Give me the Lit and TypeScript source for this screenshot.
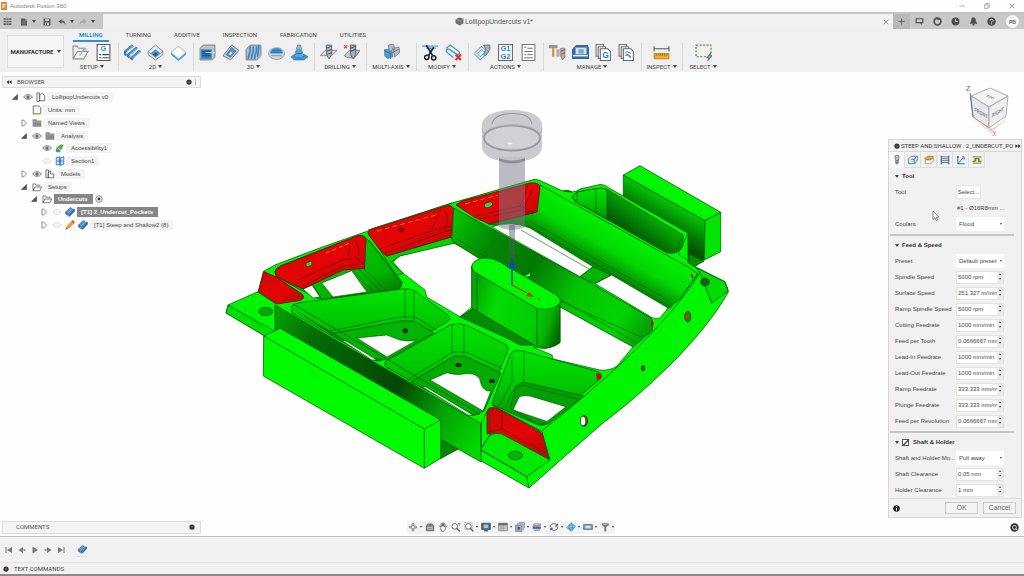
import { LitElement, html, css, svg, nothing } from "lit";
import { customElement, property, state } from "lit/decorators.js";
import { classMap } from "lit/directives/class-map.js";

/* ---------- icon set, drawn on a 16 x 16 grid ---------- */
const mill = svg`<path d="M1 8 8 1l3 1-7 7zM4 11l8-8 3 1-8 8z" fill="#4a9fe0" stroke="#27568a" stroke-width="1"/><path d="M1 8v3l6 4 8-8V4l-8 8-3-1z" fill="#2f76b8" stroke="#27568a" stroke-width="1"/><path d="M4 12l2 1" stroke="#d6ecfb"/>`;
const icons: Record<string, unknown> = {
  setup: svg`<path d="M1 14V2h4l1 2h5v3M1 14l4-7h10l-4 7z" fill="#f4f4f4" stroke="#8a8f94"/><path d="M7 11l5-7M10 4h3v3" fill="none" stroke="#a4abb1"/>`,
  gcode: svg`<path d="M2 .5h12v15H2z" fill="#fff" stroke="#555"/><text x="8" y="7" font-size="7" font-weight="700" text-anchor="middle" fill="#1c8bd0" font-family="Liberation Sans, sans-serif">G</text><path d="M4 10h2m1 0h6M4 13h2m1 0h6" stroke="#444"/>`,
  adaptive2d: svg`<path d="M0 7 7 1l2 1-7 6zM0 7v3l2 1V8zM3 10l8-7 2 1-8 7zM3 10v2l2 1v-2zM6 13l8-7 2 1-8 7zM6 13v1l2 1v-1z" fill="#3c96dd" stroke="#27689f" stroke-width=".7"/><path d="M2 8l7-6M5 11l8-7M8 14l8-7" stroke="#d6ecfb" stroke-width=".7"/>`,
  pocket2d: svg`<path d="M8 1 15 7v3l-7 5-7-5V7z" fill="#e8eaec" stroke="#777" stroke-width=".8"/><path d="M8 5l5 4-5 4-5-4z" fill="#3f97dc"/><path d="M8 8l3 2-3 2-3-2z" fill="#1a5c98"/><path d="M1 7l7 5 7-5" fill="none" stroke="#999" stroke-width=".7"/>`,
  face2d: svg`<path d="M8 2l7 6-7 6-7-6z" fill="#fff" stroke="#9aa" stroke-width=".8"/><path d="M1 8l7 6 7-6v2l-7 6-7-6z" fill="#41a3e6"/>`,
  adaptive3d: svg`<path d="M1 4l3-3h11v11l-3 3H1z" fill="#bfc4c9" stroke="#6b7278" stroke-width=".8"/><path d="M2 5h10v9H2z" fill="#2e86ce"/><path d="M3 7h8M3 9h7M3 11h8" stroke="#103f6b" stroke-width="1"/><path d="M6 8h9" stroke="#cfe7fa"/>`,
  pocket3d: svg`<path d="M9 1l7 5-8 9-7-4z" fill="#cfd3d7" stroke="#5c656d" stroke-width=".8"/><path d="M9 3.500l4 3-5 6-4-2.500z" fill="#5a94c9" stroke="#2d5f8d" stroke-width=".7"/><path d="M8 7l2 1.500-2 2L6.500 9.500z" fill="#d5e8f8"/>`,
  parallel: svg`<path d="M1 5l4-4h10v10l-4 4H1z" fill="#b7bcc1" stroke="#737a80" stroke-width=".8"/><path d="M3 14c0-4 2-4 2-12M6 14c0-4 2-4 2-12M9 14c0-4 2-4 2-12M12 12c0-4 1-4 1-11" fill="none" stroke="#2b87d3" stroke-width="1.500"/>`,
  scallop: svg`<ellipse cx="8" cy="9" rx="7.500" ry="5.500" fill="#d3d7da" stroke="#858c92" stroke-width=".7"/><path d="M2 9c0-7 12-7 12 0z" fill="#3b97de"/><path d="M4 6h8M3 8h10" stroke="#1e69a8" stroke-width=".8"/><path d="M3 11h10" stroke="#8b9298"/>`,
  steep: svg`<path d="M0 12l3-2h10l3 2-4 3H3z" fill="#3b97de" stroke="#26659b" stroke-width=".6"/><path d="M3 11l1-2h7l2 2-3 2H5zM4 8l1-2h5l1 2-2 1H6z" fill="#54a8e4" stroke="#26659b" stroke-width=".6"/><path d="M5 5 6 1h3l1 4z" fill="#8fb7d8" stroke="#4e6e88" stroke-width=".6"/>`,
  drill: svg`<path d="M0 11l5-5h11l-5 5z" fill="#e4e6e8" stroke="#7b8187" stroke-width=".8"/><path d="M6 1h5v9l-2.500 4L6 10z" fill="#b5babf" stroke="#565d63" stroke-width=".8"/><path d="M6 4l5-2M6 7l5-2M6 10l5-2" stroke="#565d63"/>`,
  drill2: svg`<path d="M1 11l5-5h10l-5 7H5z" fill="#c8ccd0" stroke="#6b7278" stroke-width=".8"/><path d="M7 1h5v9l-2.500 4L7 10z" fill="#a9afb5" stroke="#4d545a" stroke-width=".8"/><path d="M7 4l5-2M7 7l5-2" stroke="#4d545a"/><path d="M1 1l3 3M4 1 1 4" stroke="#e0452e"/>`,
  multi: svg`<path d="M1 5l7-1 2 8-6 2-3-3z" fill="#4e9cc9"/><path d="M5 1l5-1 1 5-5 2zM9 4l6-1 1 5-5 4z" fill="#b6bec4" stroke="#68747d" stroke-width=".7"/><path d="M1 6l6 3 8-4M7 9v5" fill="none" stroke="#3d6d8b" stroke-width=".8"/>`,
  scissors: svg`<path d="M0 2h15M4 4h9" stroke="#4ba0d8" stroke-width="1.300"/><path d="M4 1l6 10M11 3 6 11" stroke="#222" stroke-width="1.600"/><circle cx="4.500" cy="12.500" r="2" fill="none" stroke="#222" stroke-width="1.400"/><circle cx="11" cy="13" r="2" fill="none" stroke="#222" stroke-width="1.400"/>`,
  pathdel: svg`<path d="M1 4l4-3 8 6c2 2-1 4-3 2L4 5c-2-1-4 1-2 3l6 5" fill="none" stroke="#4b9bd3" stroke-width="1.300"/><path d="M10 10l5 5m0-5-5 5" stroke="#e0362a" stroke-width="2"/>`,
  simulate: svg`<path d="M7 2 0 9l6 6 7-7z" fill="#d7eafa" stroke="#3c8fd1" stroke-width=".9"/><path d="M7 5 3 9l3 3 4-4z" fill="none" stroke="#3c8fd1" stroke-width=".7"/><path d="M9 1h6v4l-4 6-2-1 2-5z" fill="#a7adb3" stroke="#565d63" stroke-width=".7"/>`,
  g1g2: svg`<path d="M1.500.5h13v15h-13z" fill="#fff" stroke="#666"/><g font-size="7" font-weight="700" text-anchor="middle" fill="#1583c9" font-family="Liberation Sans, sans-serif"><text x="8" y="7">G1</text><text x="8" y="14">G2</text></g>`,
  sheet: svg`<path d="M2 .5h12v15H2z" fill="#fff" stroke="#777"/><path d="M4 3h2m1 1h5M4 7h8M4 10h2m1 0h5M4 13h8" stroke="#666" stroke-width=".9"/>`,
  library: svg`<path d="M0 1h8v3H0z" fill="#8f979d"/><path d="M3 3h2v9H3z" fill="#d58a33"/><path d="M7 5h3v7H7z" fill="#a8aeb3"/><path d="M11 4h4v8l-2 3-2-3z" fill="#b7aaa2" stroke="#726a66" stroke-width=".6"/><path d="M11 7l4-2M11 10l4-2" stroke="#665f5b" stroke-width=".7"/>`,
  machine: svg`<path d="M0 14V5l4-4h11l1 3v10z" fill="#2b6ca6"/><path d="M3 3h11v7H3z" fill="#cfe3f3" stroke="#49708f" stroke-width=".7"/><path d="M6 5h5v4H6z" fill="#7fa8c8"/><path d="M1 11h14" stroke="#e6eef5" stroke-width="1.500"/>`,
  postlib: svg`<path d="M1 .5h7v11H1z" fill="#eee" stroke="#777"/><path d="M3 2.500h7v11H3z" fill="#eee" stroke="#777"/><path d="M5 4.500h7l2.500 2.500v8.500H5z" fill="#fff" stroke="#666"/><text x="10" y="13.500" font-size="8" font-weight="700" text-anchor="middle" fill="#1583c9" font-family="Liberation Sans, sans-serif">G</text>`,
  template: svg`<path d="M1 .5h7v11H1z" fill="#eee" stroke="#777"/><path d="M3 2.500h7v11H3z" fill="#eee" stroke="#777"/><path d="M5 4.500h7l2.500 2.500v8.500H5z" fill="#fff" stroke="#666"/><path d="M7 8c2-2 3 0 5 1M7 11c2-2 3 0 5 1M8 9l4 4" fill="none" stroke="#3490d4" stroke-width="1.100"/>`,
  measure: svg`<path d="M1 2v5M15 2v5M1 4.500h14" stroke="#555"/><path d="M1 9h14v5H1z" fill="#f0a830" stroke="#b97b16" stroke-width=".7"/><path d="M3 9v2m2-2v2m2-2v2m2-2v2m2-2v2m2-2v2" stroke="#8a5b10" stroke-width=".7"/>`,
  select: svg`<path d="M1 1h14v11H1z" fill="none" stroke="#3f9a4b" stroke-width="1.100" stroke-dasharray="2 1.300"/><path d="M15 8l-4 5h2l-1 3 4-5h-2z" fill="#999" stroke="#555" stroke-width=".6"/>`,

  grid: svg`<path d="M1 2h4v3H1zm5 0h4v3H6zm5 0h4v3h-4zM1 6.500h4v3H1zm5 0h4v3H6zm5 0h4v3h-4zM1 11h4v3H1zm5 0h4v3H6zm5 0h4v3h-4z" fill="#5b5b5b"/>`,
  file: svg`<path d="M2 1h8v4h4v10H2z" fill="#5a5a5a"/><path d="M11 1l3 3h-3z" fill="#5a5a5a"/><path d="M4 8h8M4 11h8" stroke="#aaa" stroke-width=".8"/>`,
  save: svg`<path d="M1 1h14v14H1z" fill="#5a5a5a"/><path d="M4 2h8v4H4zM4 9h8v5H4z" fill="#c8c8c8"/><path d="M6 10h2v4H6z" fill="#5a5a5a"/>`,
  undo: svg`<path d="M7 2v3c6 0 8 4 8 9-2-4-4-5-8-5v3L1 7z" fill="#5c5c5c"/>`,
  redo: svg`<path d="M9 2v3c-6 0-8 4-8 9 2-4 4-5 8-5v3l6-5z" fill="#a2a2a2"/>`,
  cube: svg`<path d="M1 4l7-3 7 2v8l-6 4-8-4z" fill="#6d6d6d"/><path d="M1 4l8 3 6-4" fill="none" stroke="#bbb"/><path d="M9 7v8" stroke="#999"/>`,
  chat: svg`<path d="M1 2h14v9h-3v3l-3-3H1z" fill="#4d4d4d"/><path d="M3 4h10v5H3z" fill="#c8c8c8"/>`,
  online: svg`<circle cx="8" cy="8" r="6" fill="none" stroke="#4d4d4d" stroke-width="3"/><path d="M5 1l5 4" stroke="#4d4d4d" stroke-width="2"/>`,
  clock: svg`<circle cx="8" cy="8" r="7" fill="#4d4d4d"/><path d="M8 3.500V8h4" fill="none" stroke="#ddd" stroke-width="1.600"/>`,
  bell: svg`<path d="M8 1c4 0 4 4 4 6l3 5H1l3-5c0-2 0-6 4-6z" fill="#4d4d4d"/><circle cx="8" cy="13.500" r="2" fill="#4d4d4d"/>`,
  help: svg`<circle cx="8" cy="8" r="7.500" fill="#4d4d4d"/><path d="M5.500 6.500c0-4 5.500-3 5 0-.4 1.500-2.500 1.500-2.500 3.500M8 11v2" fill="none" stroke="#ddd" stroke-width="1.700"/>`,
  plus: svg`<path d="M8 1v14M1 8h14" stroke="#555" stroke-width="1.800"/>`,
  cross: svg`<path d="M2 2l12 12M14 2 2 14" stroke="#666" stroke-width="1.800"/>`,
  min: svg`<path d="M1 8h14" stroke="#777" stroke-width="1.400"/>`,
  restore: svg`<path d="M1.500 4.500h9v10h-9zM5 4V1.500h9v10h-3" fill="none" stroke="#777" stroke-width="1.400"/>`,

  eye: svg`<path d="M1 8c3-5 11-5 14 0-3 5-11 5-14 0z" fill="#ddd" stroke="#777" stroke-width="1.400"/><circle cx="8" cy="8" r="2.600" fill="#666"/>`,
  eyeoff: svg`<path d="M1 8c3-5 11-5 14 0-3 5-11 5-14 0z" fill="#f4f4f4" stroke="#dcdcdc" stroke-width="1.400"/>`,
  open: svg`<path d="M13 3v10H3z" fill="#555" stroke="#333"/>`,
  closed: svg`<path d="M4 2h3l6 6-6 6H4z" fill="#fff" stroke="#666" stroke-width="1.500"/>`,
  doc: svg`<path d="M1.500 1.500h4V15h-4z" fill="#fff" stroke="#555" stroke-width="1.300"/><path d="M6 5l4-3 4 4v8H6z" fill="#fff" stroke="#555" stroke-width="1.300"/>`,
  units: svg`<path d="M2 1.500h9l3 3v9.500H2z" fill="#fff" stroke="#555" stroke-width="1.300"/><path d="M1 14h13" stroke="#dd9a2c" stroke-width="2"/>`,
  folder: svg`<path d="M1 2h6l1 2h7v10H1z" fill="#8b8b8b"/><path d="M1 6h14" stroke="#b5b5b5"/>`,
  access: svg`<path d="M2 7l8-5 4 1-6 12-5-1z" fill="#62a84e"/><path d="M5 8l5 5M11 2l4 2" stroke="#e8f0e4" stroke-width="1.500"/><circle cx="4" cy="12" r="3" fill="#4c8fae"/>`,
  section: svg`<path d="M2 2h5v12H2zM9 3l5-2v12l-5 2z" fill="#cfe4f6" stroke="#3178b7" stroke-width="1.400"/><path d="M8 0v16M3 8h10" stroke="#3178b7" stroke-width="1.200"/>`,
  models: svg`<path d="M1.500 1.500h4V14h-4zM5 14V6l4-3v5h5v6z" fill="#fff" stroke="#555" stroke-width="1.300"/>`,
  fopen: svg`<path d="M1.500 14V3h4l1 2h6v2M1.500 14l3-6h11l-3 6z" fill="#fafafa" stroke="#666" stroke-width="1.300"/>`,
  target: svg`<circle cx="8" cy="8" r="6.500" fill="#fff" stroke="#555" stroke-width="1.400"/><circle cx="8" cy="8" r="2.800" fill="#333"/>`,
  pencil: svg`<path d="M1 15l2-6 7-7 4 4-7 7z" fill="#eaa22f"/><path d="M10 2l2-2 4 4-2 2z" fill="#c24c3c"/><path d="M1 15l1-3 2 2z" fill="#333"/>`,
  mill,
  dot: svg`<circle cx="8" cy="8" r="7" fill="#333"/><path d="M5 8h6" stroke="#bbb" stroke-width="1.500"/>`,
  info: svg`<circle cx="8" cy="8" r="7.500" fill="#222"/><path d="M8 3v2M8 7v6" stroke="#fff" stroke-width="2"/>`,
  rewind: svg`<path d="M8 3v10L1 8zM15 3v10L8 8z" fill="#333"/>`,
  forward: svg`<path d="M1 3v10l7-5zM8 3v10l7-5z" fill="#333"/>`,

  tool: svg`<path d="M5 1h6v5l-1 2v5l-2 2-2-2V8L5 6z" fill="#b9bec2" stroke="#555"/><path d="M6 10l4-2M6 13l4-2" stroke="#444"/>`,
  geom: svg`<path d="M1 6l4-4h10v6l-5 6H1z" fill="#dcebf7" stroke="#35648d" stroke-width="1.200"/><path d="M5 7h5l3-4M10 7v6" fill="none" stroke="#2a7fc2" stroke-width="1.600"/>`,
  heights: svg`<path d="M1 6l5-4h9l-4 5H2z" fill="#f2a735" stroke="#9c6717"/><path d="M2 8h9l4-4v5l-4 5H2z" fill="#fff" stroke="#777"/>`,
  passes: svg`<path d="M2 1v14M14 1v14" stroke="#345" stroke-width="1.500"/><path d="M3 3h10M3 6h10M3 9h10M3 12h10" stroke="#4981ad" stroke-width="1.500"/>`,
  linking: svg`<path d="M3 2v12h11M3 14 12 4M10 3h3v4" fill="none" stroke="#2c6fae" stroke-width="1.600"/><circle cx="3" cy="3" r="1.600" fill="#2c6fae"/>`,
  multitab: svg`<path d="M1 2h14v12H1z" fill="#f6e3a4"/><path d="M1 3h14M1 13h14" stroke="#6d8f4a" stroke-width="1.500"/><path d="M1 10h4V6h6v4h4" fill="none" stroke="#3e6a39" stroke-width="1.800"/>`,

  orbit: svg`<path d="M8 1l3 3H5zM8 15l3-3H5zM1 8l3-3v6zM15 8l-3-3v6z" fill="#777"/><circle cx="8" cy="8" r="3" fill="none" stroke="#666" stroke-width="1.200"/>`,
  lookat: svg`<path d="M2 6l3-3h6l3 3v8H2z" fill="#888" stroke="#444"/><path d="M4 8h8v4H4z" fill="#ddd"/><path d="M5 10h6" stroke="#444"/>`,
  pan: svg`<path d="M4 9 2 7l1-1 2 2V3l1-1 1 1v4-5l1-1 1 1v5-4l1-1 1 1v5l1-2 1 1-2 6-2 2H6z" fill="#fff" stroke="#555" stroke-width="1.200"/>`,
  zoomin: svg`<circle cx="6" cy="7" r="4.500" fill="#fff" stroke="#555" stroke-width="1.400"/><path d="M9 10l5 5" stroke="#555" stroke-width="2"/><path d="M13 1v5m-2-3h4" stroke="#555"/>`,
  fit: svg`<path d="M1 1h12v11H1z" fill="none" stroke="#999" stroke-dasharray="2 1"/><circle cx="7" cy="7" r="4.500" fill="#fff" stroke="#555" stroke-width="1.300"/><path d="M10 10l5 5" stroke="#555" stroke-width="2"/>`,
  display: svg`<path d="M1 2h14v10H1z" fill="#315b8c" stroke="#444"/><path d="M4 4h8v6H4z" fill="#a8c3de"/><path d="M5 14h6" stroke="#444" stroke-width="2"/>`,
  gridset: svg`<path d="M1 2h14v12H1z" fill="#eee" stroke="#555"/><path d="M1 5h14M1 8h14M1 11h14M5 5v9M9 5v9" stroke="#777"/><path d="M1 2h14v3H1z" fill="#666"/>`,
  views: svg`<path d="M1 5h10v10H1z" fill="#9fb5c8" stroke="#4d5a66"/><path d="M3 3h10v10M6 1h9v9" fill="none" stroke="#4d5a66"/><path d="M4 8h4v4H4z" fill="#4d5a66"/>`,
  slab: svg`<path d="M3 3h11l-1 3H2z" fill="#c3c9ce" stroke="#555" stroke-width=".8"/><path d="M1 7h13v4H1z" fill="#3e6d99"/><path d="M3 12h10v2H3z" fill="#888"/>`,
  rotate: svg`<path d="M2 8c0-6 8-7 11-3M14 8c0 6-8 7-11 3" fill="none" stroke="#557" stroke-width="1.400"/><path d="M14 2v5H9zM2 14V9h5z" fill="#557"/>`,
  diamond: svg`<path d="M8 1l7 6-6 8-8-6z" fill="#4aa0dd" stroke="#2b74ac" stroke-width=".8"/><path d="M1 9l7-2 7 0M8 1v6l1 8" stroke="#9bd0f2" fill="none"/>`,
  screen: svg`<path d="M1 4h14v8H1z" fill="#7f9fc0" stroke="#445a70"/><path d="M4 6h8v4H4z" fill="#d3e0ec"/>`,
  filter: svg`<path d="M3 2h11v3l-4 3v7H7V8L3 5z" fill="#777"/><path d="M5 4h7" stroke="#ddd"/>`,

  tstart: svg`<path d="M2 2v12" stroke="#777" stroke-width="2"/><path d="M14 2v12L4 8z" fill="#777"/>`,
  tprev: svg`<path d="M10 2v12L1 8z" fill="#777"/><path d="M11 6h4v4h-4z" fill="#999"/>`,
  tplay: svg`<path d="M3 1l11 7-11 7z" fill="#777"/>`,
  tnext: svg`<path d="M6 2v12l9-6z" fill="#777"/><path d="M1 6h4v4H1z" fill="#999"/>`,
  tend: svg`<path d="M14 2v12" stroke="#777" stroke-width="2"/><path d="M2 2v12l10-6z" fill="#777"/>`,
  assist: svg`<circle cx="8" cy="8" r="7.500" fill="#333"/><circle cx="8" cy="8" r="3.500" fill="none" stroke="#eee" stroke-width="1.500"/><path d="M10 10l3 3" stroke="#eee" stroke-width="1.500"/>`,
};

const ico = (name: string, size = 9) =>
  html`<svg class="ico" width=${size} height=${size} viewBox="0 0 16 16" aria-hidden="true">${icons[name]}</svg>`;
const caret = html`<i class="caret"></i>`;

const shared = css`
  * { box-sizing: border-box; }
  button, input, select { font: inherit; color: inherit; margin: 0; padding: 0; border: 0; background: none; border-radius: 0; min-width: 0; }
  button { display: inline-flex; align-items: center; justify-content: center; }
  .ico { display: block; flex: none; }
  .caret { flex: none; display: inline-block; border: 2px solid transparent; border-top: 3px solid #444; border-bottom: 0; }
`;

/* ---------- title bar and document tab ---------- */
@customElement("title-area")
class TitleArea extends LitElement {
  static styles = [shared, css`
    :host { display: block; }
    .title { display: flex; align-items: center; height: 12px; background: #fdfdfc; color: #888; padding: 0 1px 0 1px; gap: 3px; }
    .logo { width: 6px; height: 8px; background: #e08a3c; color: #fff; font-weight: 700; line-height: 8px; text-align: center; }
    .name { flex: 1; }
    .win { width: 22px; height: 12px; }
    .bar { display: flex; height: 17px; background: #c8c8c8; border-top: 2px solid #c4c4c4; }
    .quick { display: flex; align-items: center; width: 103px; padding-left: 4px; }
    .quick button { height: 15px; gap: 4px; margin-right: 12px; }
    .quick button + button { margin-right: 10px; }
    .doc { flex: 1; display: flex; align-items: center; background: #f1f1f1; color: #555; font-size: 7px; padding-left: 6px; }
    .docname { flex: 1; display: flex; align-items: center; justify-content: center; gap: 1px; }
    .close { width: 14px; height: 15px; }
    .right { display: flex; align-items: center; width: 131px; }
    .right button { width: 17px; height: 15px; margin-right: 1px; }
    .right .add { background: #b8b8b8; }
    .right .me { width: 13px; height: 13px; border-radius: 50%; background: #f6f6f6; color: #666; font-weight: 700; font-size: 5px; margin-left: 5px; }
  `];
  render() {
    return html`
      <header class="title">
        <span class="logo">F</span><span class="name">Autodesk Fusion 360</span>
        <button class="win" aria-label="Minimize">${ico("min", 6)}</button>
        <button class="win" aria-label="Restore">${ico("restore", 6)}</button>
        <button class="win" aria-label="Close window">${ico("cross", 6)}</button>
      </header>
      <div class="bar">
        <div class="quick">
          <button aria-label="Data panel">${ico("grid", 9)}</button>
          <button aria-label="File">${ico("file", 8)}${caret}</button>
          <button aria-label="Save">${ico("save", 8)}</button>
          <button aria-label="Undo">${ico("undo", 8)}${caret}</button>
          <button aria-label="Redo">${ico("redo", 8)}${caret}</button>
        </div>
        <div class="doc">
          <span class="docname">${ico("cube", 9)}<span>LollipopUndercuts v1*</span></span>
          <button class="close" aria-label="Close document">${ico("cross", 6)}</button>
        </div>
        <div class="right">
          <button class="add" aria-label="New design">${ico("plus", 7)}</button>
          ${["chat", "online", "clock", "bell", "help"].map((n) => html`<button aria-label=${n}>${ico(n, 9)}</button>`)}
          <button class="me" aria-label="Account">PB</button>
        </div>
      </div>`;
  }
}

/* ---------- ribbon ---------- */
interface Group { label: string; icons: string[]; wide?: string }
const groups: Group[] = [
  { label: "SETUP", icons: ["setup", "gcode"] },
  { label: "2D", icons: ["adaptive2d", "pocket2d", "face2d"] },
  { label: "3D", icons: ["adaptive3d", "pocket3d", "parallel", "scallop", "steep"] },
  { label: "DRILLING", icons: ["drill", "drill2"] },
  { label: "MULTI-AXIS", icons: ["multi"], wide: "mid" },
  { label: "MODIFY", icons: ["scissors", "pathdel"] },
  { label: "ACTIONS", icons: ["simulate", "g1g2", "sheet"] },
  { label: "MANAGE", icons: ["library", "machine", "postlib", "template"] },
  { label: "INSPECT", icons: ["measure"], wide: "narrow" },
  { label: "SELECT", icons: ["select"], wide: "narrow" },
];

@customElement("tool-ribbon")
class ToolRibbon extends LitElement {
  @state() private tab = "MILLING";
  static styles = [shared, css`
    :host { display: flex; height: 43px; background: #f0f0f0; font-family: Roboto, sans-serif; color: #444; }
    .space { width: 57px; height: 33px; margin: 6px 3px 4px 7px; border: 1px solid #dcdcdc; background: #f5f5f5; font-weight: 700; gap: 3px; color: #333; }
    .main { flex: 1; min-width: 0; }
    .tabs { display: flex; height: 13px; padding-left: 1px; }
    .tabs button { margin: 0 6px 0 5px; padding: 0 6px; border-bottom: 2px solid transparent; white-space: nowrap; }
    .tabs .on { color: #1a90cf; font-weight: 700; border-color: #2f8fd6; }
    .groups { display: flex; margin-top: 1px; }
    .group { display: flex; flex-direction: column; align-items: center; padding: 0 3px 0 2px; border-right: 1px solid #dadada; height: 28px; }
    .group:last-child { border: 0; }
    .set { display: flex; height: 19px; }
    .set button { width: 23px; height: 18px; }
    .label { height: 9px; gap: 2px; white-space: nowrap; }
    .mid { width: 50px; }
    .narrow { width: 41px; }
  `];
  render() {
    return html`
      <button class="space">MANUFACTURE${caret}</button>
      <div class="main">
        <nav class="tabs">${["MILLING", "TURNING", "ADDITIVE", "INSPECTION", "FABRICATION", "UTILITIES"].map(
          (t) => html`<button class=${classMap({ on: t === this.tab })} @click=${() => (this.tab = t)}>${t}</button>`)}</nav>
        <div class="groups">${groups.map((g) => html`
          <div class="group ${g.wide ?? ""}">
            <div class="set">${g.icons.map((n) => html`<button aria-label=${n}>${ico(n, 17)}</button>`)}</div>
            <button class="label">${g.label}${caret}</button>
          </div>`)}</div>
      </div>`;
  }
}

/* ---------- browser tree ---------- */
interface Node { depth: number; cells: string[]; text: string; sel?: boolean; after?: string }
const tree: Node[] = [
  { depth: 8, cells: ["open", "eye", "doc"], text: "LollipopUndercuts v0" },
  { depth: 30, cells: ["units"], text: "Units: mm" },
  { depth: 17, cells: ["closed", "folder"], text: "Named Views" },
  { depth: 17, cells: ["open", "eye", "folder"], text: "Analysis" },
  { depth: 40, cells: ["eye", "access"], text: "Accessibility1" },
  { depth: 40, cells: ["eyeoff", "section"], text: "Section1" },
  { depth: 17, cells: ["closed", "eye", "models"], text: "Models" },
  { depth: 17, cells: ["open", "fopen"], text: "Setups" },
  { depth: 27, cells: ["open", "fopen"], text: "Undercuts", sel: true, after: "target" },
  { depth: 37, cells: ["closed", "eyeoff", "mill"], text: "[T1] 2_Undercut_Pockets", sel: true },
  { depth: 37, cells: ["closed", "eyeoff", "pencil", "mill"], text: "[T1] Steep and Shallow2 (8)" },
];

@customElement("browser-tree")
class BrowserTree extends LitElement {
  static styles = [shared, css`
    :host { display: block; width: 199px; }
    .head { display: flex; align-items: center; height: 12px; padding: 0 3px; gap: 5px; background: #f3f3f3; border: 1px solid #dcdcdc; font-family: Roboto, sans-serif; color: #555; }
    .head span { flex: 1; }
    .grip { width: 2px; height: 6px; border-left: 1px solid #bbb; margin-left: -2px; }
    ul { list-style: none; margin: 3px 0 0 -2px; padding: 0; height: 140px; display: flex; flex-direction: column; }
    li { flex: 1; display: flex; align-items: center; color: #444; }
    .cell { width: 13px; display: flex; justify-content: center; }
    .text { background: #f3f3f3; padding: 0 5px; line-height: 10px; white-space: nowrap; }
    .sel .text { background: #868686; color: #fff; font-weight: 700; margin-left: 1px; padding-left: 4px; }
  `];
  render() {
    return html`
      <div class="head">${ico("rewind", 6)}<span>BROWSER</span>${ico("dot", 6)}<i class="grip"></i></div>
      <ul>${tree.map((n) => html`
        <li class=${classMap({ sel: !!n.sel })} style="padding-left:${n.depth}px">
          ${n.cells.map((c) => html`<span class="cell">${ico(c, c === "open" || c === "closed" ? 8 : 10)}</span>`)}
          <span class="text">${n.text}</span>
          ${n.after ? html`<span class="cell">${ico(n.after, 8)}</span>` : nothing}
        </li>`)}</ul>`;
  }
}

/* ---------- operation dialog ---------- */
interface Row { label: string; kind: "select" | "num" | "button" | "note"; value: string }
const sections: { title: string; check?: boolean; rows: Row[] }[] = [
  { title: "Tool", rows: [
    { label: "Tool", kind: "button", value: "Select..." },
    { label: "", kind: "note", value: "#1 - Ø16R8mm ..." },
    { label: "Coolant", kind: "select", value: "Flood" } ] },
  { title: "Feed & Speed", rows: [
    { label: "Preset", kind: "select", value: "Default preset" },
    { label: "Spindle Speed", kind: "num", value: "5000 rpm" },
    { label: "Surface Speed", kind: "num", value: "251.327 m/min" },
    { label: "Ramp Spindle Speed", kind: "num", value: "5000 rpm" },
    { label: "Cutting Feedrate", kind: "num", value: "1000 mm/min" },
    { label: "Feed per Tooth", kind: "num", value: "0.0666667 mm" },
    { label: "Lead-In Feedrate", kind: "num", value: "1000 mm/min" },
    { label: "Lead-Out Feedrate", kind: "num", value: "1000 mm/min" },
    { label: "Ramp Feedrate", kind: "num", value: "333.333 mm/min" },
    { label: "Plunge Feedrate", kind: "num", value: "333.333 mm/min" },
    { label: "Feed per Revolution", kind: "num", value: "0.0666667 mm" } ] },
  { title: "Shaft & Holder", check: true, rows: [
    { label: "Shaft and Holder Mo...", kind: "select", value: "Pull away" },
    { label: "Shaft Clearance", kind: "num", value: "0.05 mm" },
    { label: "Holder Clearance", kind: "num", value: "1 mm" } ] },
];

@customElement("operation-dialog")
class OperationDialog extends LitElement {
  @property() heading = "STEEP AND SHALLOW : 2_UNDERCUT_PO";
  static styles = [shared, css`
    :host { display: block; position: relative; width: 134px; background: #f1f1f1; border: 1px solid #d4d4d4; color: #444; }
    .head { display: flex; align-items: center; height: 12px; gap: 1px; padding-left: 5px; font-family: Roboto, sans-serif; color: #333; border-bottom: 1px solid #d8d8d8; }
    .head span { flex: 1; white-space: nowrap; }
    .tabs { display: flex; height: 16px; }
    .tabs button { width: 16px; border-right: 1px solid #ddd; border-bottom: 1px solid #ddd; }
    .tabs .on { background: #fafafa; border-bottom-color: #fafafa; }
    section { padding: 0 17px 5px 6px; }
    .rule { height: 2px; background: #c6c6c6; margin: -3px 7px 1px 1px; }
    h2 { display: flex; align-items: center; gap: 3px; height: 16px; margin: 0; font-size: 6px; color: #333; }
    section:last-of-type { padding-bottom: 0; }
    .row { display: grid; grid-template-columns: 61px 1fr; align-items: center; height: 16px; white-space: nowrap; }
    .row label { overflow: hidden; }
    .field { display: flex; align-items: center; height: 13px; background: #fff; border: 1px solid #e2e2e2; }
    .field input { width: 40px; padding-left: 1px; height: 11px; }
    .spin { display: flex; flex-direction: column; width: 6px; height: 11px; background: #ececec; }
    .spin button { height: 5px; width: 6px; }
    .up, .down { border: 1px solid transparent; border-bottom: 2px solid #444; border-top: 0; }
    .down { border-bottom: 0; border-top: 2px solid #444; }
    .drop { display: grid; align-items: center; height: 14px; background: #fff; }
    .drop select { grid-area: 1 / 1; appearance: none; width: 100%; height: 14px; padding-left: 3px; }
    .drop .caret { grid-area: 1 / 1; justify-self: end; margin-right: 2px; pointer-events: none; border-width: 1px; border-top-width: 2px; border-bottom: 0; }
    .pick { width: 25px; height: 14px; background: #fff; border: 1px solid #e4e4e4; }
    .note { padding-left: 1px; }
    .check { appearance: none; width: 7px; height: 7px; border: 1px solid #555; background: linear-gradient(135deg, #fff 45%, #555 45%, #555 62%, #fff 62%); margin-right: 1px; }
    footer { display: flex; align-items: center; gap: 5px; height: 19px; padding: 0 5px 0 4px; border-top: 1px solid #dedede; }
    footer .gap { flex: 1; }
    footer button { width: 33px; height: 12px; border: 1px solid #ccc; background: #f4f4f4; font-size: 7px; color: #666; }
    .pointer { position: absolute; left: 43px; top: 70px; }
  `];
  private control(r: Row, id: string) {
    switch (r.kind) {
      case "button": return html`<button id=${id} class="pick">${r.value}</button>`;
      case "note": return html`<span class="note">${r.value}</span>`;
      case "select": return html`<span class="drop"><select id=${id}><option>${r.value}</option></select>${caret}</span>`;
      default: return html`<span class="field"><input id=${id} type="text" .value=${r.value}>
        <span class="spin"><button aria-label="Increase"><i class="up"></i></button><button aria-label="Decrease"><i class="down"></i></button></span></span>`;
    }
  }
  render() {
    return html`
      <div class="head">${ico("dot", 6)}<span>${this.heading}</span>${ico("forward", 6)}</div>
      <div class="tabs">${["tool", "geom", "heights", "passes", "linking", "multitab"].map(
        (n, i) => html`<button class=${i ? "" : "on"} aria-label=${n}>${ico(n, 10)}</button>`)}</div>
      ${sections.map((s, i) => html`${i ? html`<div class="rule"></div>` : nothing}
        <section>
          <h2><i class="caret"></i>${s.check ? html`<input class="check" id="chk" type="checkbox" checked><label for="chk">${s.title}</label>` : html`<span>${s.title}</span>`}</h2>
          ${s.rows.map((r, j) => html`<div class="row">${r.label ? html`<label for="f${i}-${j}">${r.label}</label>` : html`<span></span>`}${this.control(r, `f${i}-${j}`)}</div>`)}
        </section>`)}
      <footer>${ico("info", 7)}<span class="gap"></span><button>OK</button><button>Cancel</button></footer>
      <svg class="pointer" width="8" height="12" viewBox="0 0 8 12"><path d="M1 1v8.500l2-1.800 1.300 3 1.300-.6-1.300-2.900h2.600z" fill="#fff" stroke="#666" stroke-width=".8"/></svg>`;
  }
}

/* ---------- machined part ---------- */
@customElement("part-view")
class PartView extends LitElement {
  static styles = css`
    :host { display: block; }
    .scene { display: block; width: 100%; height: 100%; }
    .e { fill: none; stroke: #075c07; stroke-width: .8; stroke-linejoin: round; }
    .f { stroke: #075c07; stroke-width: .8; stroke-linejoin: round; }
    .top { fill: #00f600; }
    .w { fill: #fefefe; stroke: #075c07; stroke-width: .7; }
    .thin { fill: none; stroke: #066006; stroke-width: .6; }
    .red { fill: url(#red); stroke: #5c0505; stroke-width: .7; }
    .rl { fill: none; stroke: #770808; stroke-width: .7; }
  `;
  render() {
    return html`<svg class="scene" viewBox="0 72 1024 464" role="img" aria-label="Accessibility analysis of the part">
      <defs>
        <linearGradient id="red" x1="0" y1="0" x2="1" y2="1"><stop offset="0" stop-color="#c80808"/><stop offset=".5" stop-color="#e60505"/><stop offset="1" stop-color="#b80a0a"/></linearGradient>
        <linearGradient id="front" gradientUnits="userSpaceOnUse" x1="270" y1="310" x2="485" y2="435"><stop offset="0" stop-color="#04a804"/><stop offset=".2" stop-color="#046c04"/><stop offset=".6" stop-color="#034603"/><stop offset=".8" stop-color="#04a004"/><stop offset="1" stop-color="#03d803"/></linearGradient>
        <linearGradient id="rail1" gradientUnits="userSpaceOnUse" x1="455" y1="220" x2="650" y2="335"><stop offset="0" stop-color="#04c004"/><stop offset=".2" stop-color="#048404"/><stop offset=".4" stop-color="#047804"/><stop offset=".62" stop-color="#03c403"/><stop offset=".85" stop-color="#03d403"/><stop offset="1" stop-color="#049804"/></linearGradient>
        <linearGradient id="rail2" gradientUnits="userSpaceOnUse" x1="620" y1="225" x2="598" y2="264"><stop offset="0" stop-color="#00f400"/><stop offset=".6" stop-color="#02d802"/><stop offset="1" stop-color="#049004"/></linearGradient>
        <linearGradient id="wall" x1="0" y1="0" x2="0" y2="1"><stop offset="0" stop-color="#00e400"/><stop offset=".5" stop-color="#02c402"/><stop offset="1" stop-color="#048e04"/></linearGradient>
        <linearGradient id="wall2" x1="0" y1="0" x2="1" y2="1"><stop offset="0" stop-color="#02dc02"/><stop offset=".7" stop-color="#03b403"/><stop offset="1" stop-color="#046a04"/></linearGradient>
        <linearGradient id="dark" gradientUnits="userSpaceOnUse" x1="655" y1="208" x2="632" y2="240"><stop offset="0" stop-color="#03c403"/><stop offset="1" stop-color="#034a03"/></linearGradient>
        <linearGradient id="blk" gradientUnits="userSpaceOnUse" x1="664" y1="198" x2="648" y2="226"><stop offset="0" stop-color="#03c803"/><stop offset=".6" stop-color="#047804"/><stop offset="1" stop-color="#035003"/></linearGradient>
        <linearGradient id="boss" gradientUnits="userSpaceOnUse" x1="472" y1="300" x2="560" y2="330"><stop offset="0" stop-color="#04a804"/><stop offset=".25" stop-color="#03dc03"/><stop offset=".72" stop-color="#03cc03"/><stop offset=".86" stop-color="#04b004"/><stop offset="1" stop-color="#036803"/></linearGradient>
      </defs>

      <!-- rear clamp block -->
      <path class="f" fill="url(#blk)" d="M623.300 175 705 220.700 704.300 260 690 262 623.300 215z"/>
      <path class="f top" d="M623.300 175 640 165.700 720.700 212.300 705 220.700z"/>
      <path class="f" fill="#02e402" d="M705 220.700 720.700 212.300V251.700L704.300 260z"/>
      <path class="f" fill="#049004" d="M689 254 697 258 704 261 694 267 689 264z"/>
      <path class="f" fill="#048004" d="M560 193q6-5 12-1l-6 6z"/>

      <!-- frame silhouette -->
      <path class="f top" d="M264 271 275 265Q318 248 366 231.700T452 203L532 180Q536 178 541 181L562 190.700Q574 194 580 189L600 184.500Q604 184 609 188L688 233V263L725 281.700 728.500 291.700C700 343 640 395 603 423Q566 455 529 488L458 448 263 335 226 313 228 305 258 291.700z"/>
      <path class="e" d="M228 305 263 326M258 292 276 304"/>
      <path class="f" fill="#02cc02" d="M226 313 228 305 275 331V340L263 335z" opacity=".55"/>
      <ellipse class="f" fill="#03a803" cx="265.700" cy="311.500" rx="7" ry="4.200"/>

      <!-- front rail side and clamp block -->
      <path class="f" fill="url(#front)" d="M275 305 481 423.500V462L458 449 440 458 275 340z"/>
      <path class="f" fill="#048804" d="M440 439 458 449 440 459z"/>
      <path class="f" fill="#00fb00" d="M263.700 336 280 328.300 440.700 420V458.300L424.300 468.300 263.300 376z"/>
      <path class="e" d="M263.700 336 424.300 429 440.700 420M424.300 429V468"/>

      <!-- left red pocket -->
      <path class="red" d="M263.500 271.500 258.500 291.700 277 304 300 300.500Q306 298 302 294L276 277z"/>
      <path class="f" fill="url(#wall2)" d="M275 271 280 266 357 236Q364 234 368 240L401.700 283Q402 288 398 289L330 298Q316 301 307 293L276 277z"/>
      <path class="w" d="M303 289 312 285 320 297 313 298zM321.700 283 351.700 270.700 367 292 333 297z"/>
      <path class="red" d="M275 272Q275 268 281 266L357 236Q364 234 366 240L364.500 268.500 343 270 303 289 277 277z"/>
      <path class="rl" d="M297 280 343 260 356 258 364 264M303 286 343 266 358 264M350 241 348 256M353 240Q360 244 359 256"/>
      <path d="M326 253 350 243" stroke="#d4b84a" stroke-width=".7" stroke-dasharray="4 3"/>
      <ellipse cx="309" cy="264" rx="3.500" ry="2.200" fill="#57c23c" stroke="#331" stroke-width=".7" transform="rotate(-25 309 264)"/>
      <path class="thin" d="M352 269 373 292M357 268 381 291M363 268 386 290M312 284 321 298"/>

      <!-- middle red pocket -->
      <path class="w" d="M393 262 400 255.500 452 242 480 258 486 263 472 266V307L460 316.700 426.700 297 425 290 401.700 272z"/>
      <path class="f" fill="#02d402" d="M380 250 386.700 256 451 237 455 243 400 256 391 262 403 273 396 276z"/>
      <path class="red" d="M368 234Q368 230 373 228.500L446 206Q453 204 453.500 210L451 237 386.700 256 380 250z"/>
      <path class="rl" d="M379 249 435 230 451 226M385 253 438 234 451 230M441 209 432 229M444 211Q450 215 445 231"/>
      <path d="M377 231 436 215" stroke="#d49a3a" stroke-width=".7" stroke-dasharray="5 3"/>
      <circle cx="401" cy="230" r="2.200" fill="#a80a0a" stroke="#500" stroke-width=".7"/>
      <path class="e" d="M453 208 650 318M452 203 368 230M369 240 403 283"/>

      <!-- long rail between the pockets -->
      <path class="f" fill="url(#rail1)" d="M453.500 208 470 217 580 277 651 318Q654 322 652 331L633 347 560 307 486 263 452 241z"/>
      <path class="thin" d="M455 238 486 257 637 343M560 301 641 337"/>
      <path fill="#c00" d="M652 320q3 3 0 7l-1.500-3z"/>

      <!-- right red pocket and second rail -->
      <path class="f" fill="url(#rail2)" d="M540 185 690 268 698 274 680 299 668 309 536 236 500 226 488 224z"/>
      <path class="w" d="M491.700 227 Q510 220 530 228L593 266.700 580 276.700zM595 283.500 611.700 275 668 308 660 318Q655 320 651 317z"/>
      <path class="thin" d="M530 221 668 300M527 225 672 308M521 230 589 269"/>
      <path class="f" fill="#03b403" d="M580 276.700 593 266.700 611 275 595 283.500z"/>
      <path class="red" d="M456 205 462 201 530 183Q540 182 540 188L537 212 489 224 474 217z"/>
      <path class="rl" d="M476 216 520 206 536 213M480 219 521 210 533 214M528 185 520 207M534 186 524 208"/>
      <path d="M465 204 498 195" stroke="#d49a3a" stroke-width=".7" stroke-dasharray="5 3"/>
      <ellipse cx="488.500" cy="205" rx="4.500" ry="2.600" fill="#57c23c" stroke="#331" stroke-width=".7" transform="rotate(-20 488 205)"/>
      <path d="M691 273q3 2 2 6l-2-3z" fill="#b02000"/>

      <!-- rear dark pocket -->
      <path class="f" fill="url(#dark)" d="M571.700 197 577 192 597 188.500Q603 187 608 190L683 235V246Q678 255 667 253L575 201.700z"/>
      <path class="f" fill="url(#wall)" d="M572 197 577 192 597 188.500Q603 187 607 190V219L576 202z"/>
      <path class="thin" d="M577 192V201M596 189V213M682 236 676 252M688 233 678 254 690 262"/>

      <!-- right foot -->
      <path class="e" d="M690 263 700 271 711.700 303 728 287M698 273 680 299"/>
      <path class="f" fill="#02dc02" d="M701 276 711.700 303 728 291 725 282 697 268z"/>
      <ellipse class="f" fill="#036803" cx="705" cy="282" rx="4.500" ry="4"/>

      <!-- boss floor and open area -->
      <path class="f" fill="#038c03" d="M460 317 474 308 536 345 520 345 507 338z"/>
      <path class="w" d="M560 307 633 347 617 366Q610 371 600 370L553 359 552 355 533 347 545 349 560 343z"/>

      <!-- lower left pocket -->
      <path class="f" fill="url(#wall)" d="M291.700 308Q292 304 298 303L401.700 289Q410 288 415 291L448 315Q452 319 447 322L385 358Q380 363 374 360L292 313z"/>
      <path class="f" fill="#02b402" d="M330 334 401 321 414 321 434 333 386 360 372 358z"/>
      <path class="w" d="M356.700 338 386.700 335 400 340Q408 342 417 340L387 357zM341 340 346 341 377 360 372 360z"/>
      <path class="thin" d="M405 290V319M414 291V320M330 331 400 317 415 317 437 330"/>
      <path d="M293 309 350 343 326 331z" fill="#036603"/>
      <circle cx="405.300" cy="330.700" r="2.500" fill="#222" stroke="#064" stroke-width=".6"/>

      <!-- lower centre pocket -->
      <path class="f" fill="url(#wall)" d="M385 365Q384 361 390 359L450 325Q458 322 466 325L507 345Q509 348 507 353L482 410Q480 416 471 415L386 367z"/>
      <path class="f" fill="#02ac02" d="M411 382 454 356 465 356 501 373 484 411 474 415z"/>
      <path class="w" d="M430 380 447 372.700Q457 376 467 373.500 480 373 481 384 484 392 491 391L483 411zM421 386 426 387 473 415 468 415z"/>
      <path class="thin" d="M452 324V354M464 325V354M409 379 453 352 466 352 503 369"/>
      <ellipse cx="458.500" cy="365" rx="3" ry="2" fill="#222"/><ellipse cx="492" cy="381" rx="3" ry="2" fill="#222"/>

      <!-- lower right pocket -->
      <path class="f" fill="url(#wall)" d="M492 403 510 355Q513 349 523 351L596 371Q603 373 600 379L548 423Q543 427 536 424L493 405z"/>
      <path class="f" fill="#03a003" d="M510 408 516 386 523 382 584 396 548 424 538 424z"/>
      <path class="w" d="M513 410 519 397Q522 395 530 396L566 406.700 547 421.500z"/>
      <path class="thin" d="M524 351V381M512 356V382L499 406M505 408 514 389 522 385 578 399"/>
      <path d="M596 373q8 0 5 6l-4 1z" fill="#c40808"/>

      <!-- front red wall and foot -->
      <path class="red" d="M487 412Q488 406 497 408L539 431Q542 433 543 436L549 459 500 434Q493 432 487 434z"/>
      <path class="rl" d="M502 411V429L488 432M502 429 546 453"/>
      <path class="f" fill="#02ea02" d="M482 447 490 435Q496 432 502 434L550 460 526.700 476.700 481 450z"/>
      <ellipse class="f" fill="#03b803" cx="515.500" cy="455.500" rx="7" ry="4.200"/>
      <path class="e" d="M481 423V450L526.700 476.700 529 488M481 423 487 412M490 411V435L482 447"/>
      <path class="e" d="M700 272Q690 292 651.700 333T541.700 431L550 460M541 431 492 405M293 304 480 414"/>

      <!-- holes in the curved face -->
      <ellipse cx="687.700" cy="316.700" rx="3" ry="5.300" fill="#3c7a1c" stroke="#131" stroke-width=".7"/><path d="M687 312v8" stroke="#d22" stroke-width="1.500"/>
      <ellipse cx="643" cy="368.300" rx="1.800" ry="2.800" fill="#7a3a10" stroke="#131" stroke-width=".6"/>
      <ellipse cx="584" cy="421" rx="3.600" ry="5.500" fill="#804020" stroke="#131" stroke-width=".7"/><ellipse cx="583" cy="421" rx="2.200" ry="4.300" fill="#fff"/>

      <!-- centre boss -->
      <path class="f" fill="url(#boss)" d="M471.700 266V308L536 346Q552 351 560 342V300z"/>
      <path class="f top" d="M472 268C471 262 478 258 485 258Q493 258 500 262L553 293C561 297 562 302 558 305 552 310 543 310 536 308L476 273Q472 271 472 268z"/>
      <path class="e" d="M477 273V311M537 308V345"/>

      <!-- cutter, shank and origin -->
      <path d="M499 157H525V227Q512 233 499 227z" fill="#777788" fill-opacity=".5"/>
      <path d="M509 225H515V258H509z" fill="#556" fill-opacity=".45"/>
      <path d="M482 125C482 105 542 105 542 125V147C542 167 482 167 482 147z" fill="#c3c3c8" fill-opacity=".88"/>
      <path d="M482 128C482 150 542 150 542 128" fill="none" stroke="#b0b0b7" stroke-width=".8"/>
      <ellipse cx="512" cy="138" rx="28" ry="12.500" fill="#d1d1d5" stroke="#96969e" stroke-width="1.800"/>
      <path d="M484 134C488 122 536 122 540 134" fill="none" stroke="#b4b4ba" stroke-width=".8"/>
      <path d="M492 124Q494 114 512 113.500T532 124" fill="none" stroke="#9b9ba3" stroke-width="1.100"/>
      <path d="M499 158Q512 163 525 158V161Q512 166 499 161z" fill="#8e8e96"/>
      <ellipse cx="510" cy="143.500" rx="2.500" ry="1" fill="#fff"/>
      <circle cx="512" cy="262" r="7" fill="none" stroke="#245a24" stroke-opacity=".6" stroke-width=".8"/>
      <path d="M512 258V285" stroke="#1b4b9a" stroke-width="1.400"/><circle cx="512" cy="265.500" r="3" fill="#1b3fc0"/>
      <path d="M512 285 527 293" stroke="#b04a08" stroke-width="1.300"/><path d="M534 297l-8-1 3-4z" fill="#c23a06"/>
      <path d="M524 277l6-4v3z" fill="#5dff5d"/><path d="M539 298v3" stroke="#b04a08"/>
    </svg>`;
  }
}

/* ---------- application shell ---------- */
@customElement("app-root")
class AppRoot extends LitElement {
  static styles = [shared, css`
    :host { display: flex; flex-direction: column; height: 100vh; overflow: hidden; background: #fefefe; font: 6px/8px "Liberation Sans", Arial, sans-serif; color: #444; }
    .canvas { flex: 1; min-height: 0; position: relative; display: flex; flex-direction: column; }
    .part { position: absolute; inset: 0; }
    .upper { flex: 1; min-height: 0; position: relative; display: flex; justify-content: space-between; padding: 4px 2px 0; }
    .side { display: flex; flex-direction: column; align-items: flex-end; margin-top: -4px; }
    .cube { display: block; margin: 11px 6px 0 0; height: 56px; width: 50px; }
    .lower { position: relative; display: grid; grid-template-columns: 1fr auto 1fr; align-items: center; height: 17px; padding: 0 5px 1px 2px; }
    .comments { display: flex; align-items: center; width: 199px; height: 13px; padding: 0 5px 0 13px; background: #f4f4f4; border: 1px solid #dcdcdc; font-family: Roboto, sans-serif; color: #555; }
    .comments span { flex: 1; }
    .nav { display: flex; align-items: center; height: 13px; gap: 3px; padding: 0 1px; background: #f3f3f3; }
    .nav button { gap: 2px; height: 13px; }
    .nav .caret { border-width: 1px; border-top: 2px solid #444; border-bottom: 0; }
    .assist { justify-self: end; }
    .timeline { display: flex; align-items: center; height: 26px; padding-left: 4px; background: #f1f1f1; border-top: 1px solid #bdbdbd; }
    .timeline button { width: 10px; height: 14px; margin-right: 3px; }
    .timeline .op { margin-left: 8px; border-bottom: 1px solid #ddd; }
    .cmds { display: flex; align-items: center; gap: 5px; height: 14px; padding-left: 3px; background: #f1f1f1; border-top: 1px solid #e2e2e2; border-bottom: 2px solid #8a8a8a; font-family: Roboto, sans-serif; color: #444; }
  `];
  render() {
    const nav: [string, boolean][] = [["orbit", true], ["lookat", false], ["pan", false], ["zoomin", false], ["fit", true], ["display", true],
      ["gridset", true], ["views", true], ["slab", true], ["rotate", true], ["diamond", true], ["screen", true], ["filter", true]];
    return html`
      <title-area></title-area>
      <tool-ribbon></tool-ribbon>
      <main class="canvas">
        <part-view class="part"></part-view>
        <div class="upper">
          <browser-tree></browser-tree>
          <div class="side">
            <svg class="cube" viewBox="0 0 50 56" aria-label="View cube">
              <path d="M6 35 24 47 42 35 25 50z" fill="#bbb" opacity=".5"/>
              <path d="M5 13 24 5 42 13 23 24z" fill="#f4f4f5" stroke="#999" stroke-width=".8"/>
              <path d="M5 13 23 24V45L7 34z" fill="#e6e7e9" stroke="#999" stroke-width=".8"/>
              <path d="M42 13 23 24V45L40 33z" fill="#eeeff0" stroke="#999" stroke-width=".8"/>
              <path d="M4 10 7 34" stroke="#5866b8" stroke-width="1"/><path d="M7 34 26 47" stroke="#d58a6a" stroke-width=".8"/>
              <g font-family="Liberation Sans, sans-serif" font-weight="700" font-size="4" fill="#7a838c" text-anchor="middle">
                <text transform="matrix(.95 .55 0 1.4 15 32)">FRONT</text><text transform="matrix(.95 -.55 0 1.4 32 31)">RIGHT</text><text transform="matrix(.9 .35 -.8 .6 23 15)">TOP</text>
              </g>
              <g font-family="Liberation Sans, sans-serif" font-size="7"><text x="0" y="8" fill="#4a58b0">Z</text><text x="26" y="53" fill="#d2714c">X</text></g>
            </svg>
            <operation-dialog></operation-dialog>
          </div>
        </div>
        <div class="lower">
          <div class="comments"><span>COMMENTS</span>${ico("dot", 6)}</div>
          <div class="nav">${nav.map(([n, c]) => html`<button aria-label=${n}>${ico(n, 10)}${c ? caret : nothing}</button>`)}</div>
          <button class="assist" aria-label="Assistant">${ico("assist", 9)}</button>
        </div>
      </main>
      <div class="timeline">
        ${["tstart", "tprev", "tplay", "tnext", "tend"].map((n) => html`<button aria-label=${n}>${ico(n, 8)}</button>`)}
        <button class="op" aria-label="Operation">${ico("mill", 9)}</button>
      </div>
      <footer class="cmds">${ico("dot", 6)}<span>TEXT COMMANDS</span></footer>`;
  }
}
